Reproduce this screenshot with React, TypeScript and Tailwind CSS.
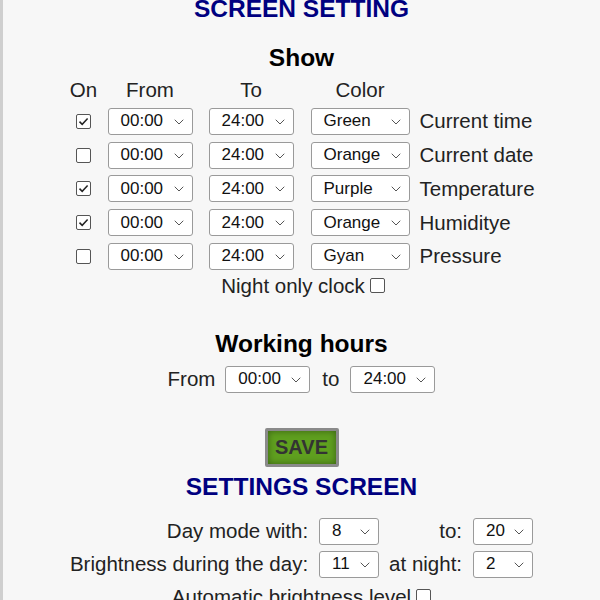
import { ChevronDown } from 'lucide-react';

const rows = [
    { on: true, color: 'Green', label: 'Current time' },
    { on: false, color: 'Orange', label: 'Current date' },
    { on: true, color: 'Purple', label: 'Temperature' },
    { on: true, color: 'Orange', label: 'Humiditye' },
    { on: false, color: 'Gyan', label: 'Pressure' },
];

function Select({ value, className }: { value: string; className: string }) {
    return (
        <div
            className={`relative flex items-center h-[27px] bg-white border border-[#9a9a9a] rounded-[3px] pl-3 text-[17px] text-[#111] ${className}`}
        >
            <span>{value}</span>
            <ChevronDown size={16} strokeWidth={1.5} className="absolute right-[5px] top-[5px] text-[#555]" />
        </div>
    );
}

function Check({ checked }: { checked?: boolean }) {
    return (
        <span className="inline-flex items-center justify-center w-[15px] h-[15px] bg-white border border-[#555] rounded-[2px]">
            {checked && (
                <svg width="11" height="11" viewBox="0 0 11 11" fill="none">
                    <path d="M1.5 5.6 L4.2 8.3 L9.6 2.6" stroke="#222" strokeWidth="1.5" />
                </svg>
            )}
        </span>
    );
}

export default function App() {
    return (
        <div
            className="min-h-[600px] bg-[#f7f7f7] border-l-[3px] border-[#cfcfcf] text-[#222] text-[20.5px] leading-[22px] flex flex-col items-center"
            style={{ fontFamily: '"Liberation Sans", Arial, sans-serif' }}
        >
            <h1 className="mt-[-5px] h-[28px] leading-[28px] text-[24.5px] font-bold text-[#000080]">SCREEN SETTING</h1>

            <h2 className="mt-[21px] h-[28px] leading-[28px] text-[24.5px] font-bold text-black">Show</h2>

            <div className="mt-[7px] grid grid-cols-[32px_85px_85px_99px_auto] gap-y-[6.75px] items-center">
                <div className="col-span-5 flex h-[22px] items-center">
                    <span className="w-[32px] text-center">On</span>
                    <span className="ml-2 w-[85px] text-center">From</span>
                    <span className="ml-4 w-[85px] text-center">To</span>
                    <span className="ml-[17px] w-[99px] text-center">Color</span>
                </div>
                {rows.map((r) => (
                    <div key={r.label} className="col-span-5 flex items-center">
                        <span className="w-[32px] flex justify-center">
                            <Check checked={r.on} />
                        </span>
                        <Select value="00:00" className="ml-2 w-[85px]" />
                        <Select value="24:00" className="ml-4 w-[85px]" />
                        <Select value={r.color} className="ml-[17px] w-[99px]" />
                        <span className="ml-[10px] w-[116px] whitespace-nowrap">{r.label}</span>
                    </div>
                ))}
            </div>

            <div className="mt-[5px] h-[22px] flex items-center gap-[5px] pl-[3px]">
                <span>Night only clock</span>
                <Check />
            </div>

            <h2 className="mt-[33px] h-[28px] leading-[28px] text-[24.5px] font-bold text-black">Working hours</h2>

            <div className="mt-[8px] flex items-center">
                <span>From</span>
                <Select value="00:00" className="ml-[10px] w-[85px]" />
                <span className="ml-[12px]">to</span>
                <Select value="24:00" className="ml-[11px] w-[85px]" />
            </div>

            <button className="mt-[35px] w-[74px] h-[39px] rounded-[2px] border-[3px] border-[#8a8a8a] bg-[#5f9f1f] shadow-[inset_0_0_7px_rgba(0,0,0,0.4)] text-[20px] font-bold text-[#333]">
                SAVE
            </button>

            <h1 className="mt-[6px] h-[28px] leading-[28px] text-[24.5px] font-bold text-[#000080]">SETTINGS SCREEN</h1>

            <div className="mt-[17px] grid grid-cols-[auto_60px_auto_60px] gap-y-[6px] items-center">
                <span className="text-right pr-[11px] whitespace-nowrap">Day mode with:</span>
                <Select value="8" className="w-[60px]" />
                <span className="text-right pr-[11px] pl-[10px]">to:</span>
                <Select value="20" className="w-[60px]" />

                <span className="text-right pr-[11px] whitespace-nowrap">Brightness during the day:</span>
                <Select value="11" className="w-[60px]" />
                <span className="text-right pr-[11px] pl-[10px] whitespace-nowrap">at night:</span>
                <Select value="2" className="w-[60px]" />

                <div className="col-span-4 mt-[2px] flex justify-center items-center gap-[5px]">
                    <span>Automatic brightness level</span>
                    <Check />
                </div>
            </div>
        </div>
    );
}
